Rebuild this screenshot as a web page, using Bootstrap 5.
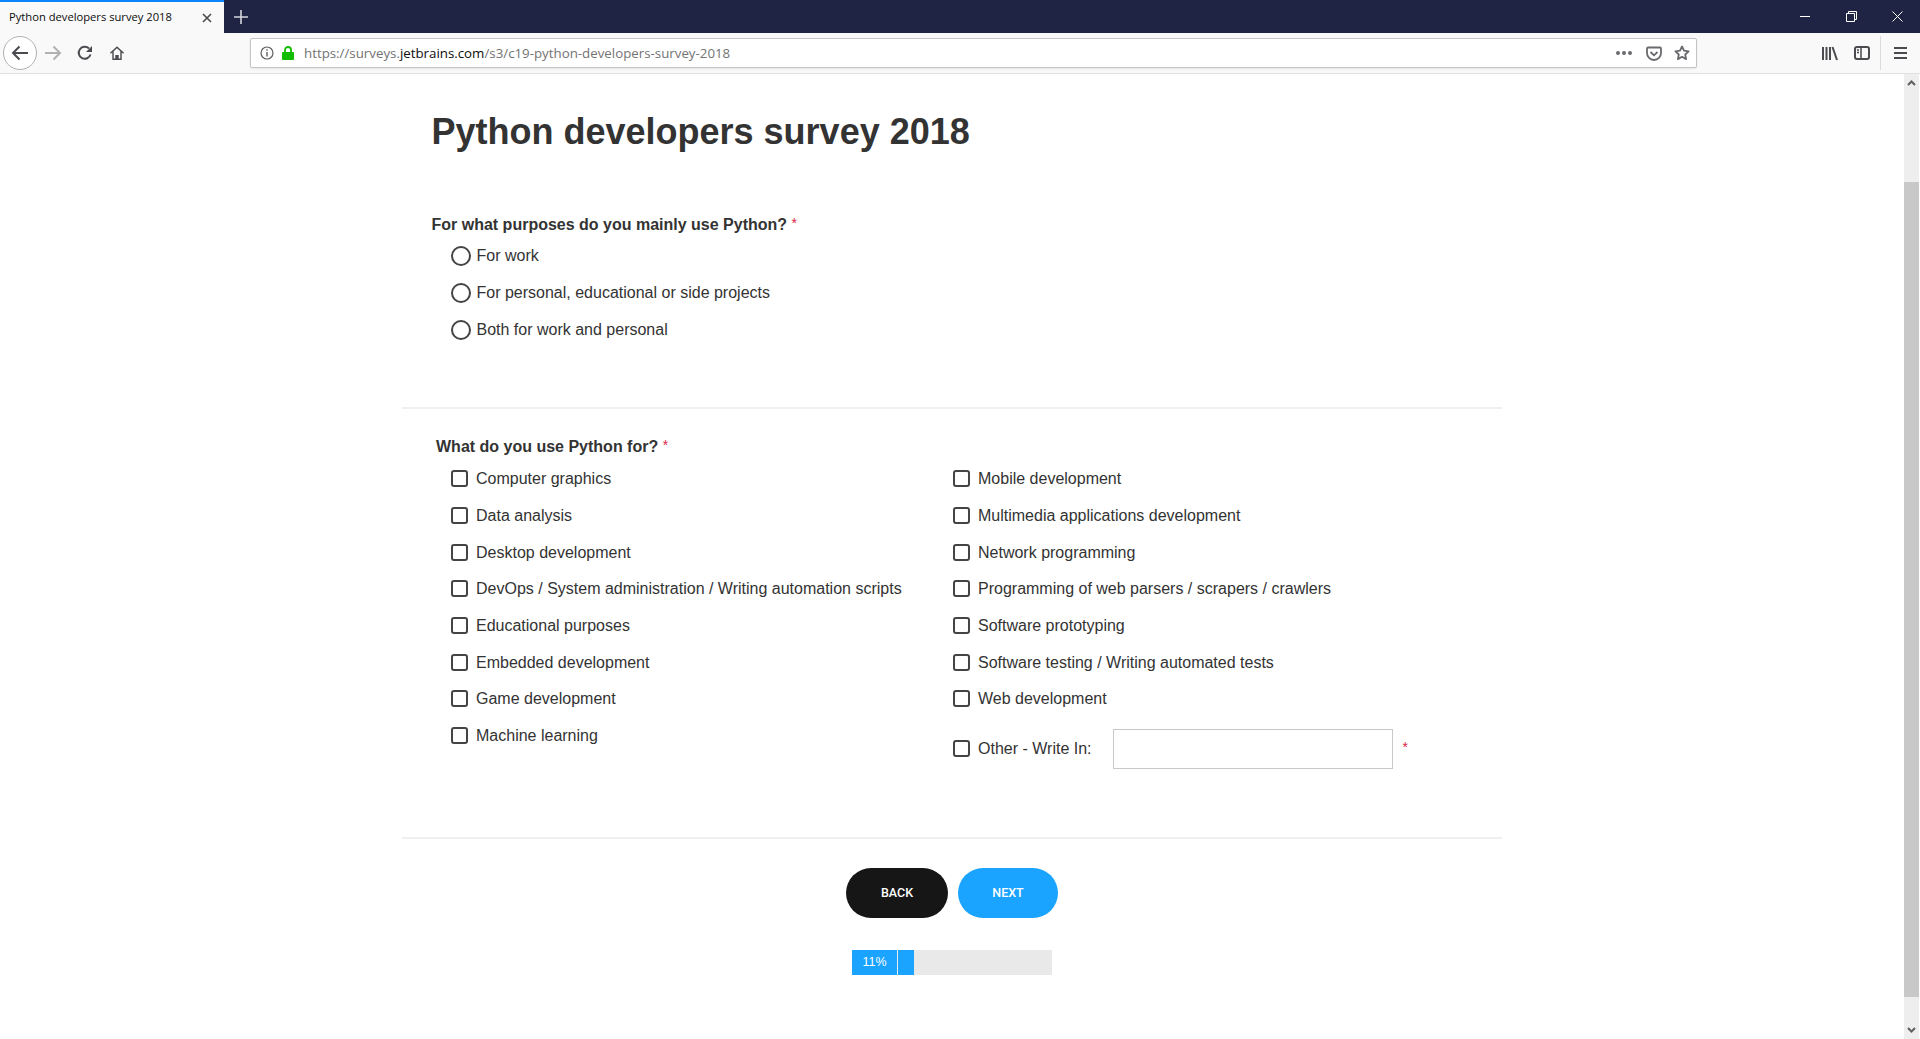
<!DOCTYPE html>
<html lang="en">
<head>
    <meta charset="UTF-8" />
    <title>Python developers survey 2018</title>
    <link rel="stylesheet" href="https://cdn.jsdelivr.net/npm/bootstrap@5.3.0/dist/css/bootstrap.min.css" />
    <style>
        html, body { height: 100%; overflow: hidden; }
        body { font-family: "Liberation Sans", Arial, sans-serif; font-size: 16px; color: #333; background: #fff; }
        .tab-strip { height: 33px; background: #1f2445; color: #fff; }
        .tab-active { width: 224px; height: 33px; background: #f9f9f9; border-top: 2px solid #0a84ff; color: #0c0c0d; font-family: "Open Sans", sans-serif; font-size: 11.2px; padding: 0 9px; }
        .tab-plus { width: 33px; height: 33px; }
        .win-btn { width: 46px; height: 33px; }
        .tool-bar { height: 41px; background: #f9f9f9; border-bottom: 1px solid #e0e0e1; padding-left: 3px; }
        .back-ring { width: 34px; height: 34px; border: 1px solid #b1b1b3; border-radius: 50%; background: #fff; }
        .tool-icon { width: 32px; }
        .url-box { width: 1447px; height: 30px; margin-left: 117px; background: #fff; border: 1px solid #c4c4c6; border-radius: 2px; box-shadow: 0 1px 2px rgba(0,0,0,.08); padding: 0 6px 0 9px; font-family: "Open Sans", sans-serif; font-size: 13.3px; color: #737373; }
        .url-box b { font-weight: 400; color: #0c0c0d; }
        .url-text { margin-left: 10px; padding-top: 1px; }
        .url-pocket { margin-left: 14px; }
        .url-star { margin-left: 12px; }
        .tool-sep { width: 1px; height: 34px; background: #dcdcde; margin: 0 13px 0 10px; }
        .page-area { height: 965px; }
        .page-main { height: 965px; overflow: hidden; }
        .survey-wrap { width: 1100px; }
        .survey-title { font-size: 36px; font-weight: 700; line-height: 40px; margin: 38px 0 0 29.5px; color: #333; }
        .q-block { height: 194px; margin: 61px 0 0 29.5px; }
        .q-title { font-size: 16px; font-weight: 700; line-height: 20px; margin: 0; color: #333; }
        .q-title i { color: #d9234b; font-style: normal; font-weight: 400; font-size: 14px; vertical-align: 2px; }
        .opt-row { display: flex; align-items: center; gap: 5px; height: 36.7px; padding-left: 20px; line-height: 20px; }
        .opts-radio { margin-top: 3px; }
        .opts-radio .opt-row { padding-left: 19.5px; gap: 5.5px; }
        .radio-mark { width: 20px; height: 20px; border: 2px solid #444; border-radius: 50%; flex: none; }
        .check-mark { width: 17px; height: 17px; border: 2px solid #444; border-radius: 3px; flex: none; margin: -1px 3px 0 -.5px; }
        .split-line { height: 2px; background: #efefef; }
        .q-two { height: 428px; padding: 26px 0 0 34px; }
        .q-two .q-title { margin-bottom: 4px; }
        .opts-left { width: 502px; margin-left: -4.5px; }
        .opt-row.other-row { height: 40px; margin-top: 11px; }
        .other-input { width: 280px; height: 40px; border: 1px solid #c8c8c8; margin-left: 16px; flex: none; }
        .other-star { color: #d9234b; font-size: 14px; margin: -4px 0 0 5px; }
        .btn-row { gap: 10px; margin-top: 29px; }
        .pill-btn { width: 102px; height: 50px; border-radius: 25px; border: 0; color: #fff; font-family: "Roboto", sans-serif; font-size: 12.5px; font-weight: 500; padding: 0; }
        .pill-btn.btn-back { background: #161616; }
        .pill-btn.btn-next { width: 100px; background: #1aa3ff; }
        .prog-track { width: 200px; height: 25px; background: #e9e9e9; margin-top: 32px; font-size: 12.5px; color: #fff; }
        .prog-label { width: 45px; background: #1aa3ff; }
        .prog-fill { width: 16px; margin-left: 1px; background: #1aa3ff; }
        .scroll-bar { width: 15px; margin-right: 1px; background: #eeeeee; }
        .scroll-thumb { height: 815px; margin-top: 90px; background: #c8c8c8; }
        .scroll-end { height: 18px; }
        .tab-close { margin-right: 2px; }
    </style>
</head>
<body>

<!-- browser chrome -->
<div class="tab-strip d-flex align-items-start">
    <div class="tab-active d-flex align-items-center justify-content-between">
        <span>Python developers survey 2018</span>
        <svg width="12" height="12" viewBox="0 0 12 12" class="tab-close"><path d="M2 2l8 8M10 2l-8 8" stroke="#4a4a4f" stroke-width="1.6" fill="none"/></svg>
    </div>
    <div class="tab-plus d-flex align-items-center justify-content-center">
        <svg width="14" height="14" viewBox="0 0 14 14"><path d="M7 0v14M0 7h14" stroke="#d4d5dc" stroke-width="1.6" fill="none"/></svg>
    </div>
    <div class="ms-auto d-flex">
        <div class="win-btn d-flex align-items-center justify-content-center"><svg width="11" height="11" viewBox="0 0 11 11"><path d="M0 5.5h10" stroke="#fff" fill="none"/></svg></div>
        <div class="win-btn d-flex align-items-center justify-content-center"><svg width="11" height="11" viewBox="0 0 11 11"><path d="M.5 2.5h8v8h-8zM2.500 2.500v-2h8v8h-2" stroke="#fff" fill="none"/></svg></div>
        <div class="win-btn d-flex align-items-center justify-content-center"><svg width="11" height="11" viewBox="0 0 11 11"><path d="M.5.5l10 10M10.5.5l-10 10" stroke="#fff" fill="none"/></svg></div>
    </div>
</div>
<div class="tool-bar d-flex align-items-center">
    <div class="back-ring d-flex align-items-center justify-content-center">
        <svg width="18" height="16" viewBox="0 0 18 16"><path d="M17 8H2M8.500 1.500L2 8l6.500 6.500" stroke="#4a4a4f" stroke-width="2" fill="none"/></svg>
    </div>
    <div class="tool-icon d-flex justify-content-center">
        <svg width="18" height="16" viewBox="0 0 18 16"><path d="M1 8h15M9.500 1.500L16 8l-6.500 6.500" stroke="#b1b1b3" stroke-width="2" fill="none"/></svg>
    </div>
    <div class="tool-icon d-flex justify-content-center">
        <svg width="16" height="16" viewBox="0 0 16 16"><path d="M13.500 9.500A6 6 0 1 1 12 3.500" stroke="#4a4a4f" stroke-width="2" fill="none"/><path d="M15 1v6H9z" fill="#4a4a4f"/></svg>
    </div>
    <div class="tool-icon d-flex justify-content-center">
        <svg width="16" height="16" viewBox="0 0 16 16"><path d="M8 1.300L1 7.800l.8.9L3.300 7.400V15h9.400V7.400l1.500 1.300.8-.9zM4.700 13.600V6.300L8 3.300l3.300 3V13.600H9.700V10H6.300v3.600z" fill="#4a4a4f" fill-rule="evenodd"/></svg>
    </div>
    <div class="url-box d-flex align-items-center">
        <svg width="14" height="14" viewBox="0 0 14 14"><circle cx="7" cy="7" r="6" stroke="#5f5f5f" stroke-width="1.200" fill="none"/><path d="M7 6v4.500M7 3.200v1.600" stroke="#5f5f5f" stroke-width="1.400"/></svg>
        <svg width="12" height="14" viewBox="0 0 12 14" class="ms-2"><path d="M3 6V4a3 3 0 0 1 6 0v2" stroke="#12bc00" stroke-width="1.800" fill="none"/><rect y="6" width="12" height="8" rx="1" fill="#12bc00"/></svg>
        <span class="url-text">https://surveys.<b>jetbrains.com</b>/s3/c19-python-developers-survey-2018</span>
        <svg width="16" height="4" viewBox="0 0 16 4" class="ms-auto"><circle cx="2" cy="2" r="2" fill="#6a6a6e"/><circle cx="8" cy="2" r="2" fill="#6a6a6e"/><circle cx="14" cy="2" r="2" fill="#6a6a6e"/></svg>
        <svg width="16" height="15" viewBox="0 0 16 15" class="url-pocket"><path d="M1 2.500a1 1 0 0 1 1-1h12a1 1 0 0 1 1 1V7a7 7 0 0 1-14 0z" stroke="#6a6a6e" stroke-width="1.800" fill="none"/><path d="M4.500 6L8 9.300 11.500 6" stroke="#6a6a6e" stroke-width="1.800" fill="none"/></svg>
        <svg width="16" height="16" viewBox="0 0 16 16" class="url-star"><path d="M8 1.500l2 4.200 4.600.6-3.400 3.200.9 4.600L8 11.800l-4.100 2.300.9-4.600L1.400 6.300 6 5.700z" stroke="#6a6a6e" stroke-width="1.800" fill="none" stroke-linejoin="round"/></svg>
    </div>
    <div class="ms-auto d-flex align-items-center">
        <svg width="16" height="15" viewBox="0 0 16 15"><path d="M1 1v13M4.500 1v13M8 1v13M10.500 1l4.500 13" stroke="#4a4a4f" stroke-width="2" fill="none"/></svg>
        <svg width="16" height="14" viewBox="0 0 16 14" style="margin-left:16px"><rect x="1" y="1" width="14" height="12" rx="2" stroke="#4a4a4f" stroke-width="2" fill="none"/><path d="M7 1v12M3 4h2M3 6.500h2" stroke="#4a4a4f" stroke-width="1.500"/></svg>
        <div class="tool-sep"></div>
        <svg width="13" height="12" viewBox="0 0 13 12" style="margin-right:13px"><path d="M0 1h13M0 6h13M0 11h13" stroke="#4a4a4f" stroke-width="2"/></svg>
    </div>
</div>

<!-- page -->
<div class="page-area d-flex">
    <div class="page-main flex-grow-1">
        <div class="survey-wrap mx-auto">
            <h1 class="survey-title">Python developers survey 2018</h1>

            <div class="q-block">
                <p class="q-title">For what purposes do you mainly use Python? <i>*</i></p>
                <div class="opts-radio">
                    <div class="opt-row"><span class="radio-mark"></span>For work</div>
                    <div class="opt-row"><span class="radio-mark"></span>For personal, educational or side projects</div>
                    <div class="opt-row"><span class="radio-mark"></span>Both for work and personal</div>
                </div>
            </div>
            <div class="split-line"></div>

            <div class="q-two">
                <p class="q-title">What do you use Python for? <i>*</i></p>
                <div class="d-flex">
                    <div class="opts-left" id="colLeft"></div>
                    <div class="flex-grow-1" id="colRight"></div>
                </div>
            </div>
            <div class="split-line"></div>

            <div class="btn-row d-flex justify-content-center">
                <button class="pill-btn btn-back">BACK</button>
                <button class="pill-btn btn-next">NEXT</button>
            </div>
            <div class="d-flex justify-content-center">
                <div class="prog-track d-flex">
                    <div class="prog-label d-flex align-items-center justify-content-center">11%</div>
                    <div class="prog-fill"></div>
                </div>
            </div>
        </div>
    </div>
    <div class="scroll-bar d-flex flex-column align-items-center">
        <div class="scroll-end d-flex align-items-center justify-content-center">
            <svg width="9" height="6" viewBox="0 0 9 6"><path d="M1 5l3.500-3.500L8 5" stroke="#5f5f5f" stroke-width="2" fill="none"/></svg>
        </div>
        <div class="scroll-thumb w-100"></div>
        <div class="scroll-end d-flex align-items-center justify-content-center mt-auto">
            <svg width="9" height="6" viewBox="0 0 9 6"><path d="M1 1l3.500 3.500L8 1" stroke="#5f5f5f" stroke-width="2" fill="none"/></svg>
        </div>
    </div>
</div>

<script>
    // the two checkbox columns
    var leftOpts = ["Computer graphics", "Data analysis", "Desktop development", "DevOps / System administration / Writing automation scripts",
        "Educational purposes", "Embedded development", "Game development", "Machine learning"];
    var rightOpts = ["Mobile development", "Multimedia applications development", "Network programming", "Programming of web parsers / scrapers / crawlers",
        "Software prototyping", "Software testing / Writing automated tests", "Web development"];
    function optRow(text) {
        return '<div class="opt-row"><span class="check-mark"></span>' + text + '</div>';
    }
    document.getElementById("colLeft").innerHTML = leftOpts.map(optRow).join("");
    document.getElementById("colRight").innerHTML = rightOpts.map(optRow).join("") +
        '<div class="opt-row other-row"><span class="check-mark"></span>Other - Write In:<span class="other-input"></span><span class="other-star">*</span></div>';
</script>
</body>
</html>
